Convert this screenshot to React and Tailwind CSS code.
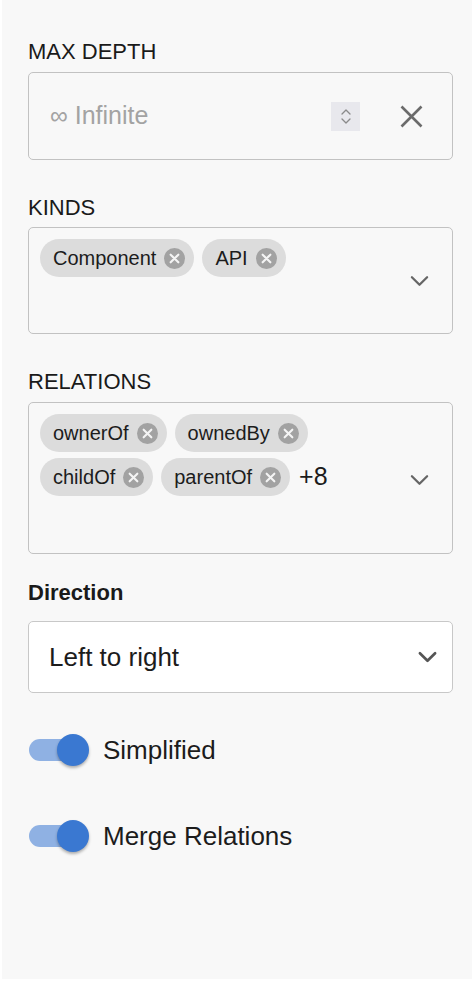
import React from 'react';

const Chip = ({ label }) => (
  <span className="inline-flex items-center h-[38px] pl-[13px] pr-[9px] rounded-full bg-[#dcdcdc] text-[20px] text-[#1c1c1c]">
    {label}
    <svg className="ml-[8px]" width="21" height="21" viewBox="0 0 24 24">
      <circle cx="12" cy="12" r="12" fill="#a2a2a2" />
      <path d="M7.6 7.6l8.8 8.8M16.4 7.6l-8.8 8.8" stroke="#f4f4f4" strokeWidth="2.4" strokeLinecap="round" />
    </svg>
  </span>
);

const Chevron = ({ className, stroke = '#666', width = 2.4 }) => (
  <svg className={className} viewBox="0 0 20 12" fill="none">
    <path d="M2 2l8 8 8-8" stroke={stroke} strokeWidth={width} strokeLinecap="round" strokeLinejoin="round" />
  </svg>
);

const Toggle = ({ label }) => (
  <div className="flex items-center h-[32px]">
    <div className="relative w-[60px] h-[32px] ml-[1px]">
      <div className="absolute left-0 top-[5px] w-[58px] h-[22px] rounded-full bg-[#8fb1e3]" />
      <div className="absolute right-0 top-0 w-[32px] h-[32px] rounded-full bg-[#3a78d1] shadow-[0_2px_3px_rgba(0,0,0,0.3)]" />
    </div>
    <span className="ml-[14px] text-[26px] text-[#1c1c1c]">{label}</span>
  </div>
);

const Label = ({ children, className = '' }) => (
  <div className={`h-[22px] leading-[22px] text-[22px] text-[#1a1a1a] ${className}`}>{children}</div>
);

export default function App() {
  return (
    <div className="min-h-[981px] bg-white pl-[2px] pr-[2px] pb-[2px]" style={{ fontFamily: '"Liberation Sans", Arial, sans-serif' }}>
      <div className="bg-[#f8f8f8] h-[979px] pl-[26px] pr-[19px] pt-[41px]">
        <Label className="mb-[9px]">MAX DEPTH</Label>
        <div className="h-[88px] rounded-[5px] border border-[#c2c2c2] flex items-center pl-[21px] pr-[29px]">
          <span className="flex-1 text-[25px] text-[#a3a3a3]">∞ Infinite</span>
          <div className="w-[29px] h-[29px] bg-[#e8e8ed] flex flex-col items-center justify-center gap-[3px]">
            <svg width="10" height="6" viewBox="0 0 10 6" fill="none">
              <path d="M1 5l4-4 4 4" stroke="#8a8a8a" strokeWidth="1.3" strokeLinecap="round" strokeLinejoin="round" />
            </svg>
            <svg width="10" height="6" viewBox="0 0 10 6" fill="none">
              <path d="M1 1l4 4 4-4" stroke="#8a8a8a" strokeWidth="1.3" strokeLinecap="round" strokeLinejoin="round" />
            </svg>
          </div>
          <svg className="ml-[40px]" width="23" height="23" viewBox="0 0 23 23" fill="none">
            <path d="M1.5 1.5l20 20M21.5 1.5l-20 20" stroke="#6b6b6b" strokeWidth="2.6" />
          </svg>
        </div>

        <Label className="mt-[37px] mb-[8px]">KINDS</Label>
        <div className="h-[107px] rounded-[5px] border border-[#c2c2c2] flex pl-[11px] pr-[23px] pt-[11px]">
          <div className="flex-1 flex flex-wrap content-start gap-x-[8px] gap-y-[7px]">
            <Chip label="Component" />
            <Chip label="API" />
          </div>
          <Chevron className="w-[19px] h-[12px] mt-[36px]" />
        </div>

        <Label className="mt-[37px] mb-[9px]">RELATIONS</Label>
        <div className="h-[152px] rounded-[5px] border border-[#c2c2c2] flex pl-[11px] pr-[23px] pt-[11px]">
          <div className="w-[362px] flex flex-wrap content-start items-center gap-x-[8px] gap-y-[6px]">
            <Chip label="ownerOf" />
            <Chip label="ownedBy" />
            <Chip label="childOf" />
            <Chip label="parentOf" />
            <span className="ml-[1px] text-[25px] text-[#1c1c1c]">+8</span>
          </div>
          <div className="flex-1 flex justify-end">
            <Chevron className="w-[19px] h-[12px] mt-[60px]" />
          </div>
        </div>

        <Label className="mt-[28px] mb-[17px] font-bold">Direction</Label>
        <div className="h-[72px] rounded-[5px] border border-[#c8c8c8] bg-white flex items-center pl-[20px] pr-[15px]">
          <span className="flex-1 text-[26px] text-[#1c1c1c]">Left to right</span>
          <Chevron className="w-[19px] h-[12px]" stroke="#555" width={2.8} />
        </div>

        <div className="mt-[41px] flex flex-col gap-[54px]">
          <Toggle label="Simplified" />
          <Toggle label="Merge Relations" />
        </div>
      </div>
    </div>
  );
}
